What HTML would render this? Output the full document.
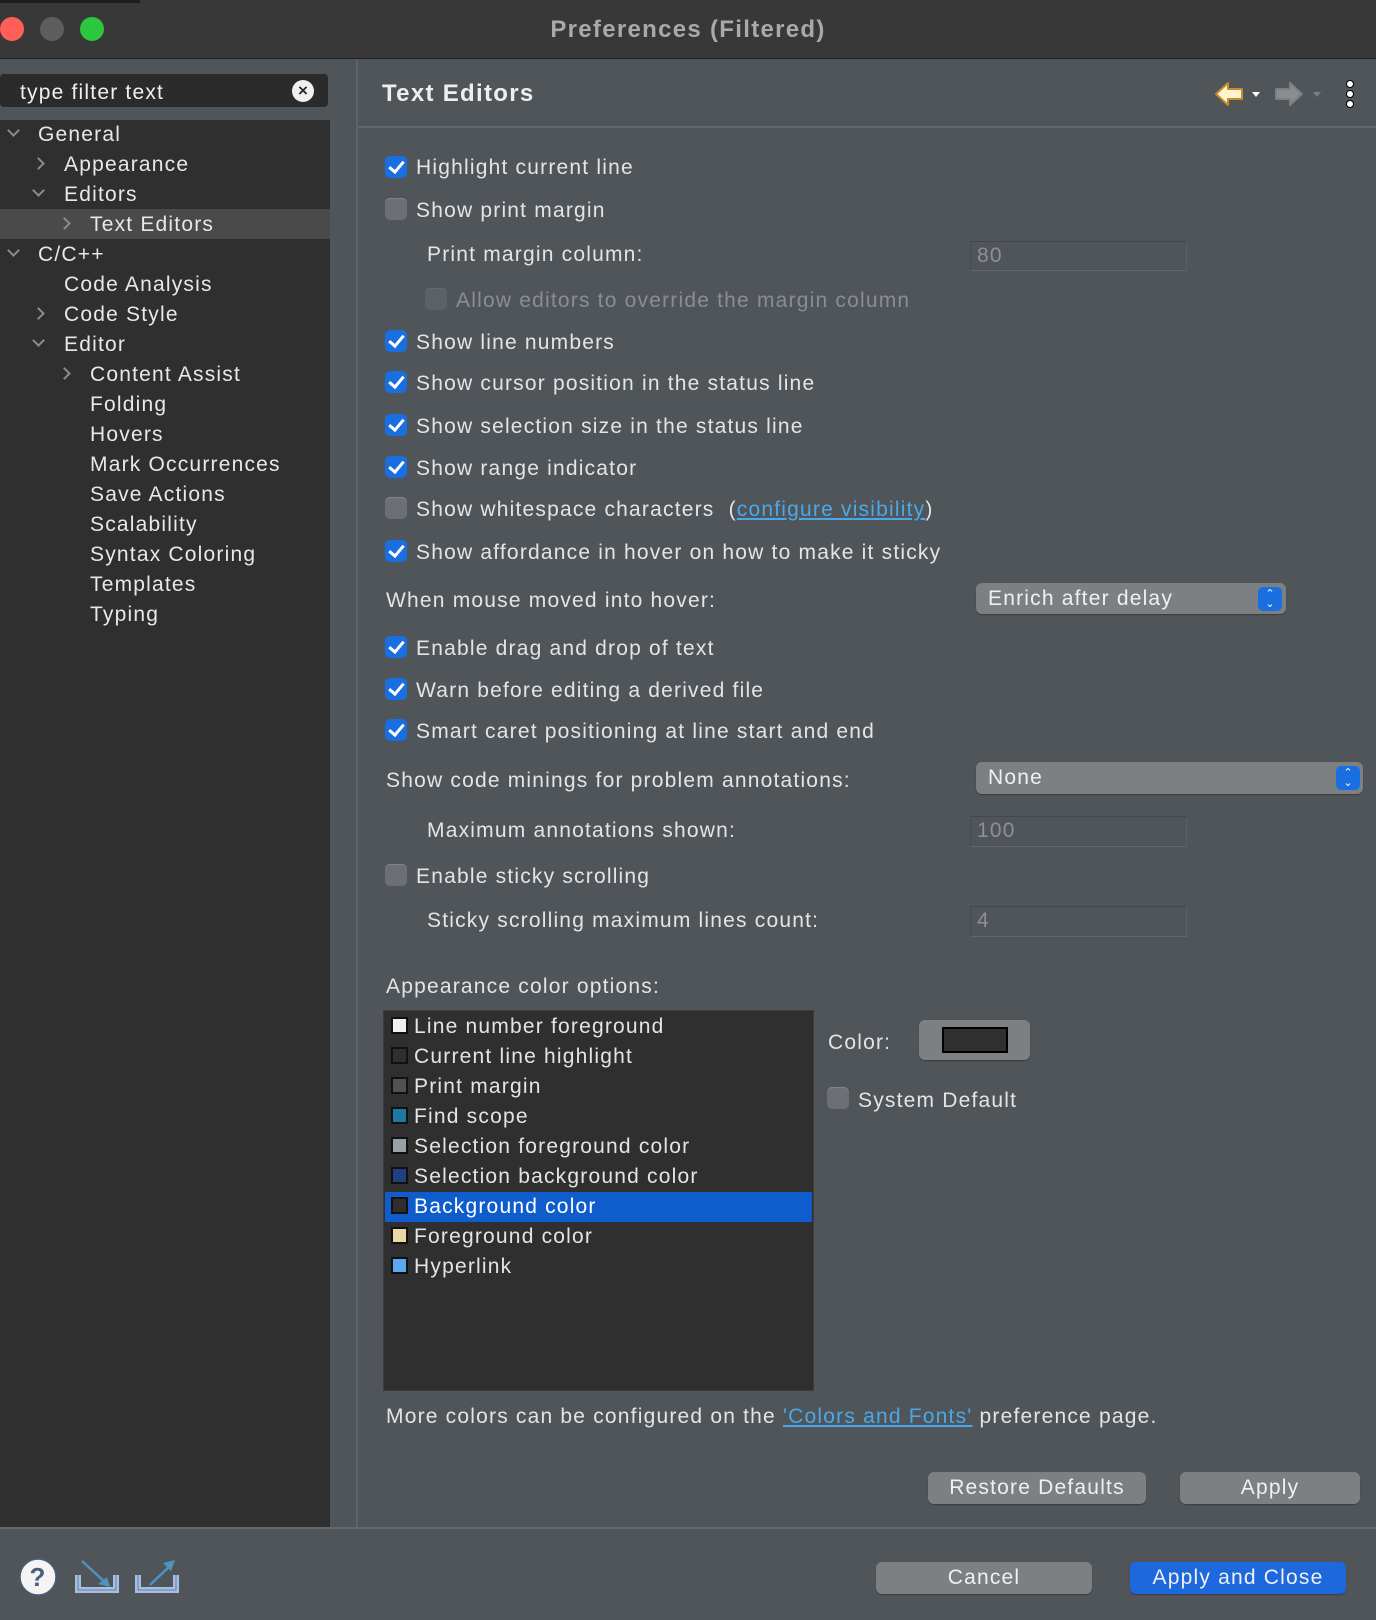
<!DOCTYPE html>
<html><head><meta charset="utf-8"><style>
*{margin:0;padding:0;box-sizing:border-box}
body{width:1376px;height:1620px;background:#50555a;font-family:"Liberation Sans",sans-serif;color:#e4e4e4;font-size:21px;position:relative;overflow:hidden;letter-spacing:1.2px}
.a{position:absolute;white-space:nowrap}
.t{position:absolute;white-space:nowrap;line-height:24px;margin-top:1px}
.cb{position:absolute;width:22px;height:22px;border-radius:5px;background:#6c7074;box-shadow:inset 0 1px 0 #808488}
.cb.on{background:#1a6fe0;box-shadow:none}
.cb.on:after{content:"";position:absolute;left:7px;top:2px;width:6px;height:12px;border:solid #fff;border-width:0 3px 3px 0;transform:rotate(40deg)}
.cb.dis{opacity:.45}
.inp{position:absolute;border-top:1px solid #44484c;border-bottom:1px solid #62666a;border-left:1px solid #484c50;border-right:1px solid #5c6064;color:#8d9094;padding-left:6px;line-height:28px;font-size:21px}
.btn{position:absolute;background:#7c8083;border-radius:6px;text-align:center;color:#f0f0f0;font-size:21px;box-shadow:0 1px 1px rgba(0,0,0,.3)}
.tree{position:absolute;font-size:21px;color:#e8e8e8;line-height:24px;margin-top:1px}
.chev{position:absolute;width:9px;height:9px;border:solid #8c8c8c;border-width:0 2px 2px 0}
.sw{position:absolute;width:17px;height:17px;border:2px solid #111}
</style></head><body>
<!-- title bar -->
<div class="a" style="left:0;top:0;width:1376px;height:59px;background:#383838;border-bottom:1px solid #202020"></div>
<div class="a" style="left:0;top:0;width:140px;height:3px;background:#1d1d1d"></div>
<div class="a" style="left:0;top:17px;width:24px;height:24px;border-radius:50%;background:#fe5f57"></div>
<div class="a" style="left:40px;top:17px;width:24px;height:24px;border-radius:50%;background:#5d5d5d"></div>
<div class="a" style="left:80px;top:17px;width:24px;height:24px;border-radius:50%;background:#2ac73f"></div>
<div class="t" style="left:0;width:1376px;text-align:center;top:17px;font-weight:bold;font-size:24px;color:#a9a9a9;letter-spacing:1.3px">Preferences (Filtered)</div>

<!-- sidebar -->
<div class="a" style="left:0;top:74px;width:328px;height:33px;background:#2b2b2b;border-radius:4px"></div>
<div class="t" style="left:20px;top:80px;color:#f0f0f0">type filter text</div>
<div class="a" style="left:292px;top:80px;width:22px;height:22px;border-radius:50%;background:#f0f0f0;color:#2b2b2b;font-size:17px;line-height:22px;text-align:center;font-weight:bold;letter-spacing:0">×</div>
<div class="a" style="left:0;top:120px;width:330px;height:1407px;background:#2f2f2f"></div>
<div class="a" style="left:0;top:209px;width:330px;height:30px;background:#4a4a4a"></div>
<div class="a" style="left:356px;top:59px;width:2px;height:1468px;background:#5f6367"></div>

<div class="chev" style="left:9px;top:126px;transform:rotate(45deg)"></div>
<div class="tree" style="left:38px;top:122px">General</div>
<div class="chev" style="left:34px;top:159px;transform:rotate(-45deg)"></div>
<div class="tree" style="left:64px;top:152px">Appearance</div>
<div class="chev" style="left:34px;top:186px;transform:rotate(45deg)"></div>
<div class="tree" style="left:64px;top:182px">Editors</div>
<div class="chev" style="left:60px;top:219px;transform:rotate(-45deg)"></div>
<div class="tree" style="left:90px;top:212px">Text Editors</div>
<div class="chev" style="left:9px;top:246px;transform:rotate(45deg)"></div>
<div class="tree" style="left:38px;top:242px">C/C++</div>
<div class="tree" style="left:64px;top:272px">Code Analysis</div>
<div class="chev" style="left:34px;top:309px;transform:rotate(-45deg)"></div>
<div class="tree" style="left:64px;top:302px">Code Style</div>
<div class="chev" style="left:34px;top:336px;transform:rotate(45deg)"></div>
<div class="tree" style="left:64px;top:332px">Editor</div>
<div class="chev" style="left:60px;top:369px;transform:rotate(-45deg)"></div>
<div class="tree" style="left:90px;top:362px">Content Assist</div>
<div class="tree" style="left:90px;top:392px">Folding</div>
<div class="tree" style="left:90px;top:422px">Hovers</div>
<div class="tree" style="left:90px;top:452px">Mark Occurrences</div>
<div class="tree" style="left:90px;top:482px">Save Actions</div>
<div class="tree" style="left:90px;top:512px">Scalability</div>
<div class="tree" style="left:90px;top:542px">Syntax Coloring</div>
<div class="tree" style="left:90px;top:572px">Templates</div>
<div class="tree" style="left:90px;top:602px">Typing</div>

<!-- header -->
<div class="t" style="left:382px;top:81px;font-weight:bold;font-size:24px;color:#eeeeee;letter-spacing:1.3px">Text Editors</div>
<div class="a" style="left:358px;top:126px;width:1018px;height:2px;background:#62676b"></div>
<svg class="a" style="left:1212px;top:76px" width="120" height="36" viewBox="0 0 120 36">
<path d="M4 18 L16 7 L16 13 L30 13 L30 23 L16 23 L16 29 Z" fill="#fff3d0" stroke="#c88a2a" stroke-width="2" stroke-linejoin="round"/>
<path d="M40 16 L48 16 L44 21 Z" fill="#fff"/>
<path d="M90 18 L78 7 L78 13 L64 13 L64 23 L78 23 L78 29 Z" fill="#8a8e90" stroke="#7c8082" stroke-width="2" stroke-linejoin="round"/>
<path d="M101 16 L109 16 L105 21 Z" fill="#7c8082"/>
</svg>
<svg class="a" style="left:1344px;top:80px" width="12" height="32"><circle cx="6" cy="4" r="3.5" fill="#fff" stroke="#000"/><circle cx="6" cy="14" r="3.5" fill="#fff" stroke="#000"/><circle cx="6" cy="24" r="3.5" fill="#fff" stroke="#000"/></svg>

<!-- checkboxes -->
<div class="cb on" style="left:385px;top:156px"></div><div class="t" style="left:416px;top:155px">Highlight current line</div>
<div class="cb" style="left:385px;top:198px"></div><div class="t" style="left:416px;top:198px">Show print margin</div>
<div class="t" style="left:427px;top:242px">Print margin column:</div>
<div class="inp" style="left:970px;top:241px;width:217px;height:30px">80</div>
<div class="cb dis" style="left:425px;top:288px"></div><div class="t" style="left:456px;top:288px;color:#8a8d91">Allow editors to override the margin column</div>
<div class="cb on" style="left:385px;top:330px"></div><div class="t" style="left:416px;top:330px">Show line numbers</div>
<div class="cb on" style="left:385px;top:371px"></div><div class="t" style="left:416px;top:371px">Show cursor position in the status line</div>
<div class="cb on" style="left:385px;top:414px"></div><div class="t" style="left:416px;top:414px">Show selection size in the status line</div>
<div class="cb on" style="left:385px;top:456px"></div><div class="t" style="left:416px;top:456px">Show range indicator</div>
<div class="cb" style="left:385px;top:497px"></div><div class="t" style="left:416px;top:497px">Show whitespace characters &nbsp;(<span style="color:#4aa8e8;text-decoration:underline">configure visibility</span>)</div>
<div class="cb on" style="left:385px;top:540px"></div><div class="t" style="left:416px;top:540px">Show affordance in hover on how to make it sticky</div>
<div class="t" style="left:386px;top:588px">When mouse moved into hover:</div>
<div class="btn" style="left:976px;top:583px;width:310px;height:31px;text-align:left;padding-left:12px;line-height:31px">Enrich after delay</div>
<div class="a" style="left:1258px;top:587px;width:24px;height:24px;background:#1a6fe0;border-radius:5px;color:#fff;font-size:11px;line-height:10px;text-align:center;padding-top:2px;letter-spacing:0">⌃<br>⌄</div>
<div class="cb on" style="left:385px;top:636px"></div><div class="t" style="left:416px;top:636px">Enable drag and drop of text</div>
<div class="cb on" style="left:385px;top:678px"></div><div class="t" style="left:416px;top:678px">Warn before editing a derived file</div>
<div class="cb on" style="left:385px;top:719px"></div><div class="t" style="left:416px;top:719px">Smart caret positioning at line start and end</div>
<div class="t" style="left:386px;top:768px">Show code minings for problem annotations:</div>
<div class="btn" style="left:976px;top:762px;width:387px;height:32px;text-align:left;padding-left:12px;line-height:32px">None</div>
<div class="a" style="left:1336px;top:766px;width:24px;height:24px;background:#1a6fe0;border-radius:5px;color:#fff;font-size:11px;line-height:10px;text-align:center;padding-top:2px;letter-spacing:0">⌃<br>⌄</div>
<div class="t" style="left:427px;top:818px">Maximum annotations shown:</div>
<div class="inp" style="left:970px;top:816px;width:217px;height:31px">100</div>
<div class="cb" style="left:385px;top:864px"></div><div class="t" style="left:416px;top:864px">Enable sticky scrolling</div>
<div class="t" style="left:427px;top:908px">Sticky scrolling maximum lines count:</div>
<div class="inp" style="left:970px;top:906px;width:217px;height:31px">4</div>
<div class="t" style="left:386px;top:974px">Appearance color options:</div>

<!-- list -->
<div class="a" style="left:383px;top:1010px;width:431px;height:381px;background:#2f2f2f;border:1px solid #3c3c3c"></div>
<div class="a" style="left:385px;top:1192px;width:427px;height:30px;background:#0f5dcd"></div>
<div class="sw" style="left:391px;top:1017px;background:#f0f0f0"></div><div class="t" style="left:414px;top:1014px">Line number foreground</div>
<div class="sw" style="left:391px;top:1047px;background:#2f2f2f"></div><div class="t" style="left:414px;top:1044px">Current line highlight</div>
<div class="sw" style="left:391px;top:1077px;background:#4e5256"></div><div class="t" style="left:414px;top:1074px">Print margin</div>
<div class="sw" style="left:391px;top:1107px;background:#1e78a0"></div><div class="t" style="left:414px;top:1104px">Find scope</div>
<div class="sw" style="left:391px;top:1137px;background:#98a2a4"></div><div class="t" style="left:414px;top:1134px">Selection foreground color</div>
<div class="sw" style="left:391px;top:1167px;background:#213f82"></div><div class="t" style="left:414px;top:1164px">Selection background color</div>
<div class="sw" style="left:391px;top:1197px;background:#2f2f2f"></div><div class="t" style="left:414px;top:1194px;color:#fff">Background color</div>
<div class="sw" style="left:391px;top:1227px;background:#e8d8a4"></div><div class="t" style="left:414px;top:1224px">Foreground color</div>
<div class="sw" style="left:391px;top:1257px;background:#5aa8f0"></div><div class="t" style="left:414px;top:1254px">Hyperlink</div>

<div class="t" style="left:828px;top:1030px">Color:</div>
<div class="btn" style="left:919px;top:1020px;width:111px;height:40px"></div>
<div class="a" style="left:942px;top:1027px;width:66px;height:26px;background:#2f2f2f;border:2px solid #000"></div>
<div class="cb" style="left:827px;top:1087px"></div><div class="t" style="left:858px;top:1088px">System Default</div>

<div class="t" style="left:386px;top:1404px">More colors can be configured on the <span style="color:#4aa8e8;text-decoration:underline">'Colors and Fonts'</span> preference page.</div>

<div class="btn" style="left:928px;top:1472px;width:218px;height:32px;line-height:32px">Restore Defaults</div>
<div class="btn" style="left:1180px;top:1472px;width:180px;height:32px;line-height:32px">Apply</div>

<div class="a" style="left:0;top:1527px;width:1376px;height:2px;background:#62676b"></div>
<div class="btn" style="left:876px;top:1562px;width:216px;height:32px;line-height:32px">Cancel</div>
<div class="btn" style="left:1130px;top:1562px;width:216px;height:32px;line-height:32px;background:#1d68dc">Apply and Close</div>

<!-- bottom icons -->
<svg class="a" style="left:16px;top:1555px" width="170" height="44" viewBox="0 0 170 44">
<circle cx="22" cy="22" r="18" fill="#f4f4f4" stroke="#4a5e7e" stroke-width="1.5"/>
<text x="22" y="31" text-anchor="middle" font-family="Liberation Sans" font-weight="bold" font-size="26" fill="#4a5e7e">?</text>
<path d="M62 20 L62 35 L100 35 L100 20" fill="none" stroke="#a8c0e0" stroke-width="6"/>
<path d="M62 20 L62 35 L100 35 L100 20" fill="none" stroke="#5f7fb4" stroke-width="1"/>
<path d="M66 6 L91 29" stroke="#4f93c0" stroke-width="2.5"/>
<path d="M94 32 L82 29 L91 22 Z" fill="#4f93c0"/>
<path d="M122 20 L122 35 L160 35 L160 20" fill="none" stroke="#a8c0e0" stroke-width="6"/>
<path d="M122 20 L122 35 L160 35 L160 20" fill="none" stroke="#5f7fb4" stroke-width="1"/>
<path d="M134 30 L156 9" stroke="#4f93c0" stroke-width="2.5"/>
<path d="M159 5 L147 8 L155 16 Z" fill="#4f93c0"/>
</svg>
</body></html>
